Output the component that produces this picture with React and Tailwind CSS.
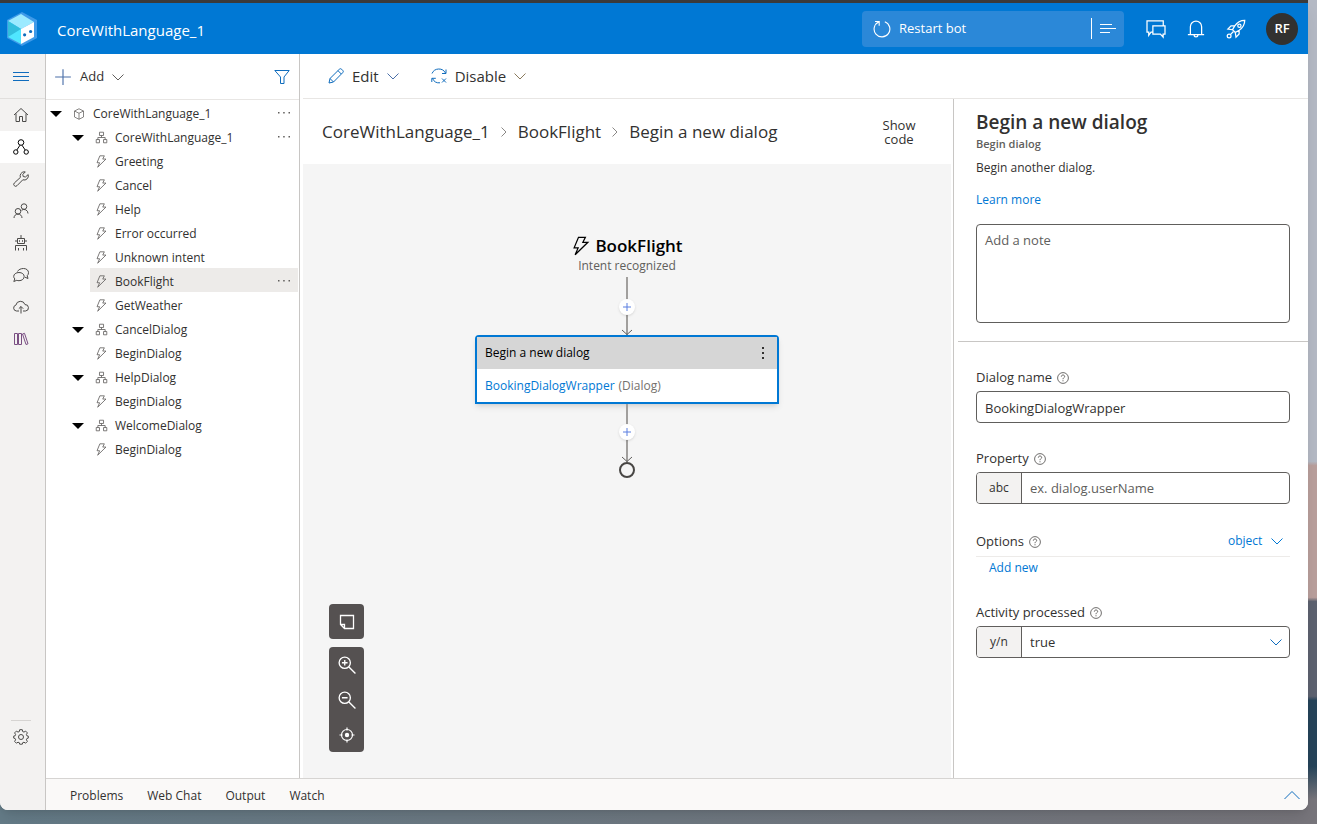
import { useState } from "react";

const Icon = ({ size = 16, className = "", children }) => (
  <svg
    width={size}
    height={size}
    viewBox="0 0 16 16"
    fill="none"
    stroke="currentColor"
    strokeWidth="1"
    className={`shrink-0 ${className}`}
    aria-hidden="true"
  >
    {children}
  </svg>
);

const BoltIcon = (props) => (
  <Icon {...props}>
    <path d="M6 1h5.500L9.500 5h4L3.300 15l2.400-5.500H2.500z" />
  </Icon>
);

const ChevronDown = ({ className = "" }) => (
  <svg width="12" height="12" viewBox="0 0 12 12" fill="none" stroke="currentColor" className={`shrink-0 ${className}`} aria-hidden="true">
    <path d="M.5 3.5L6 9l5.5-5.5" />
  </svg>
);

const FlowIcon = (props) => (
  <Icon {...props}>
    <path d="M5.5 1.5h5v4h-5zM1.5 10.5h4v4h-4zM10.5 10.5h4v4h-4zM8 5.5V8M3.5 10.5V8h9v2.5" />
  </Icon>
);

const CubeIcon = (props) => (
  <Icon {...props}>
    <path d="M8 1l6 3v8l-6 3-6-3V4zM2 4l6 3 6-3M8 7v8" />
  </Icon>
);

const HelpIcon = () => (
  <Icon size={12} className="text-[#605e5c]">
    <circle cx="8" cy="8" r="7.2" strokeWidth="1.2" />
    <path d="M5.8 6.2c0-1.4 1-2.2 2.2-2.2s2.2.8 2.2 2c0 1.5-2.2 1.7-2.2 3.6M8 11v1.4" strokeWidth="1.3" />
  </Icon>
);

const Logo = () => (
  <svg width="30" height="34" viewBox="0 0 30 34" aria-hidden="true">
    <path d="M15 0l15 8v18l-15 8L0 26V8z" fill="#3f9ae8" />
    <path d="M14 2l13 8-13 7L1 9z" fill="#9ceaff" />
    <path d="M1 9l13 8v15L1 25z" fill="#50e6ff" />
    <path d="M1 9l13 8L1 25z" fill="#32bedd" />
    <path d="M14 17l13-7v15l-13 7z" fill="#fff" />
    <circle cx="17.6" cy="22.8" r="1.6" fill="#0f6cbd" />
    <circle cx="23.6" cy="19.5" r="1.6" fill="#0f6cbd" />
  </svg>
);

const navItems = [
  {
    label: "Home",
    icon: <path d="M1 8l7-6.5L15 8M3 6.5v8h3.5V9.5h3v5H13v-8" />,
  },
  {
    label: "Create",
    icon: (
      <>
        <circle cx="8" cy="3.5" r="2.8" />
        <circle cx="2.8" cy="13" r="2.2" />
        <circle cx="13.2" cy="13" r="2.2" />
        <path d="M7 6.2L3.8 11M9 6.2l3.2 4.8" />
      </>
    ),
  },
  {
    label: "Configure",
    icon: (
      <path d="M11 .8a4.2 4.2 0 0 0-3.6 5.6L1.3 12a1.9 1.9 0 0 0 2.7 2.7l5.8-5.9A4.2 4.2 0 0 0 15.2 3.6L12.4 6l-2.2-.5L9.8 3.4 12.3.9z" />
    ),
  },
  {
    label: "User input",
    icon: (
      <>
        <circle cx="11" cy="3.6" r="2.8" />
        <circle cx="5" cy="8.3" r="2.8" />
        <path d="M1 15c0-2.4 1.8-3.9 4-3.9S9 12.600 9 15M8.500 7.300A4 4 0 0 1 15 10.500" />
      </>
    ),
  },
  {
    label: "Bot responses",
    icon: (
      <>
        <path d="M8 0v3.500M4.500 3.500h7v5h-7zM3 5v2M13 5v2M2.500 15.500v-5h11v5M5.500 13v2.500M10.500 13v2.500" />
        <path d="M6 6h1M9 6h1" strokeWidth="1.4" />
      </>
    ),
  },
  {
    label: "QnA",
    icon: (
      <path d="M4.500 4.500C5.500 2.500 8 1.500 10.500 1.500c3 0 5 1.800 5 4.200 0 1.300-.5 2.300-1.300 3l.8 2.800-3-1.300M6 5.500c3 0 5.200 1.700 5.200 4s-2.200 4.200-5.200 4.200c-.8 0-1.500-.1-2.200-.4L.8 14.500l1-2.600A3.600 3.600 0 0 1 .7 9.500c0-2.300 2.300-4 5.300-4z" />
    ),
  },
  {
    label: "Publish",
    icon: (
      <path d="M6 12H3.500a3 3 0 0 1-.6-5.900A4.700 4.700 0 0 1 12 5.600 3.200 3.200 0 0 1 12.500 12H10M8 14.500v-7M5.800 9.700L8 7.500l2.200 2.200" />
    ),
  },
  {
    label: "Package manager",
    tint: "text-[#7a4f83]",
    icon: <path d="M1.500 2.500h3v11h-3zM5.500 2.500h3v11h-3zM9.500 3l2-.7 3.500 10.500-2 .7z" />,
  },
];

const treeItems = [
  { label: "CoreWithLanguage_1", level: 0, type: "bot", menu: true },
  { label: "CoreWithLanguage_1", level: 1, type: "dialog", menu: true },
  { label: "Greeting", level: 2 },
  { label: "Cancel", level: 2 },
  { label: "Help", level: 2 },
  { label: "Error occurred", level: 2 },
  { label: "Unknown intent", level: 2 },
  { label: "BookFlight", level: 2, menu: true },
  { label: "GetWeather", level: 2 },
  { label: "CancelDialog", level: 1, type: "dialog" },
  { label: "BeginDialog", level: 2 },
  { label: "HelpDialog", level: 1, type: "dialog" },
  { label: "BeginDialog", level: 2 },
  { label: "WelcomeDialog", level: 1, type: "dialog" },
  { label: "BeginDialog", level: 2 },
];

const indents = ["ml-0", "ml-[22px]", "ml-[44px]"];

const Header = () => (
  <header className="flex h-[51px] shrink-0 items-center bg-[#0078d4] pl-[7px] pr-[10px] text-white">
    <Logo />
    <h1 className="ml-5 flex-1 pt-[3px] text-[15px]">CoreWithLanguage_1</h1>
    <div className="flex h-9 w-[262px] items-center rounded-sm bg-[#2b88d8]">
      <button className="flex flex-1 items-center gap-2 pl-[11px] text-left text-[13px]">
        <Icon size={18}>
          <path d="M10.500 1.500A7 7 0 1 1 5 1.700M1.800 1.300h3.700V5" />
        </Icon>
        Restart bot
      </button>
      <span className="h-[21px] w-px bg-white" />
      <button className="px-2" aria-label="Bot actions">
        <Icon>
          <path d="M0 3.500h12M0 7.500h16M0 11.500h10" />
        </Icon>
      </button>
    </div>
    <div className="ml-[22px] flex items-center gap-5">
      <button aria-label="Web chat">
        <Icon size={20}>
          <path d="M5 10.500H4L2.200 13v-2.500H.8v-9h13V5M5.500 5.500h9.700v6.500h-1.500v2.500L11.500 12h-6z" />
        </Icon>
      </button>
      <button aria-label="Notifications">
        <Icon size={20}>
          <path d="M1.500 12.500h13M3.500 12.500V6.200a4.500 4.500 0 0 1 9 0v6.300M6.500 12.700c0 2 3 2 3 0" />
        </Icon>
      </button>
      <button aria-label="Get started">
        <Icon size={20}>
          <path d="M15 1c-3.500 0-6 1.500-8 4.500L5.200 8.600l2.200 2.200L10.500 9C13.500 7 15 4.500 15 1zM7 5.500H4L1.500 8l3.700.6M10.500 9v3L8 14.500l-.6-3.700" />
          <circle cx="10.700" cy="5.300" r="1.300" />
          <circle cx="2.500" cy="13.500" r="1.500" />
          <path d="M3.500 12.500L6 10" />
        </Icon>
      </button>
      <button className="h-8 w-8 rounded-full bg-[#323130] text-[13px] font-semibold">RF</button>
    </div>
  </header>
);

const NavRail = () => (
  <nav className="flex w-[46px] shrink-0 flex-col border-r border-[#c8c6c4] bg-[#f3f2f1] text-[#4b4a48]">
    <button className="flex h-[45px] shrink-0 items-center border-b border-[#e1dfdd] pl-[13px]" aria-label="Menu">
      <Icon className="text-[#0f6cbd]">
        <path d="M0 4.500h16M0 8.500h16M0 12.500h16" />
      </Icon>
    </button>
    {navItems.map((item) => (
      <a
        key={item.label}
        href="#"
        aria-label={item.label}
        className={`flex h-8 items-center pl-[13px] ${item.label === "Create" ? "bg-white text-black" : ""} ${item.tint || ""}`}
      >
        <Icon>{item.icon}</Icon>
      </a>
    ))}
    <div className="ml-[11px] mr-[14px] mt-auto border-t border-[#d6d4d2]" />
    <a href="#" aria-label="Settings" className="mb-[57px] flex h-8 items-center pl-[13px]">
      <Icon>
        <path d="M6.700.7h2.600l.4 1.900 1.300.5 1.600-1 1.800 1.800-1 1.600.5 1.300 1.400.3v2l-1.400.4-.5 1.300 1 1.600-1.800 1.800-1.600-1-1.300.5-.4 1.500H6.700l-.4-1.500-1.300-.5-1.600 1-1.800-1.800 1-1.600-.5-1.300-1.400-.4v-2l1.400-.3.5-1.300-1-1.600 1.800-1.800 1.600 1 1.300-.5z" />
        <circle cx="8" cy="8" r="2.500" />
      </Icon>
    </a>
  </nav>
);

const ProjectTree = ({ selected, onSelect }) => (
  <aside className="flex w-[254px] shrink-0 flex-col border-r border-[#c8c6c4]">
    <div className="flex h-[46px] shrink-0 items-center border-b border-[#e8e6e4] pl-2 pr-[9px]">
      <button className="flex items-center gap-2 text-[13px] text-[#323130]">
        <Icon size={18} className="text-[#4a6fa8]">
          <path d="M8 1v14M1 8h14" />
        </Icon>
        Add
        <ChevronDown className="text-[#605e5c]" />
      </button>
      <button className="ml-auto text-[#0f6cbd]" aria-label="Filter">
        <Icon>
          <path d="M.8 1.500h14.400L10 8v6.500H6.500V8z" />
        </Icon>
      </button>
    </div>
    <ul>
      {treeItems.map((item, i) => (
        <li key={i} className={`mr-px ${indents[item.level]}`}>
          <button
            onClick={() => onSelect(i)}
            className={`flex h-6 w-full items-center pt-[3px] text-left text-[12px] text-[#323130] ${selected === i ? "bg-[#edebe9]" : ""}`}
          >
            {item.type && (
              <span className="flex w-[22px] pl-1">
                <svg width="12" height="6" viewBox="0 0 12 6" aria-hidden="true">
                  <path d="M0 0h12L6 6z" fill="#000" />
                </svg>
              </span>
            )}
            <span className="flex w-[25px] pl-[5px] text-[#605e5c]">
              {item.type === "bot" && <CubeIcon size={12} />}
              {item.type === "dialog" && <FlowIcon size={13} />}
              {!item.type && <BoltIcon size={13} />}
            </span>
            <span className="flex-1">{item.label}</span>
            {item.menu && (
              <svg width="12" height="12" viewBox="0 0 12 12" fill="#605e5c" className="mr-2" aria-hidden="true">
                <path d="M0 4h1.500v1.500H0zM5.200 4h1.500v1.500H5.200zM10.500 4H12v1.500h-1.500z" />
              </svg>
            )}
          </button>
        </li>
      ))}
    </ul>
  </aside>
);

const Toolbar = () => (
  <div className="ml-[3px] flex h-[45px] shrink-0 items-center gap-8 border-b border-[#e8e6e4] pl-[25px] text-[15px] text-[#323130]">
    <button className="flex items-center gap-2">
      <Icon className="text-[#0f6cbd]">
        <path d="M1 15l1-4.500L11.300 1.300a1.700 1.700 0 0 1 2.400 0l1 1a1.700 1.700 0 0 1 0 2.400L5.500 14zM10 2.700L13.300 6M2 10.500L5.500 14" />
      </Icon>
      Edit
      <ChevronDown className="text-[#4a6fa8]" />
    </button>
    <button className="flex items-center gap-2">
      <Icon className="text-[#0f6cbd]">
        <path d="M1 5.500A7.500 7.500 0 0 1 14.500 5M15 1.500V5.500h-4M9 14.800A7.300 7.300 0 0 1 1.500 10.500M.8 14V10.300h4M11 10.500l4 4M15 10.500l-4 4" />
      </Icon>
      Disable
      <ChevronDown className="text-[#8a7a5c]" />
    </button>
  </div>
);

const BreadcrumbArrow = () => (
  <svg width="6" height="10" viewBox="0 0 6 10" fill="none" stroke="#8a8886" aria-hidden="true">
    <path d="M.5.500L5 5 .5 9.500" />
  </svg>
);

const Edge = ({ className, buttonTop }) => (
  <div className={`relative flex w-4 flex-col items-center ${className}`}>
    <span className="w-[2px] flex-1 bg-[#a19f9d]" />
    <button
      aria-label="Add action"
      className={`absolute flex h-4 w-4 items-center justify-center rounded-full bg-white text-[#5b7fe0] shadow ${buttonTop}`}
    >
      <svg width="8" height="8" viewBox="0 0 8 8" fill="none" stroke="currentColor" aria-hidden="true">
        <path d="M4 0v8M0 4h8" />
      </svg>
    </button>
    <svg width="12" height="6" viewBox="0 0 12 6" fill="none" stroke="#605e5c" className="absolute bottom-0" aria-hidden="true">
      <path d="M1 1l5 4.500L11 1" />
    </svg>
  </div>
);

const Canvas = () => (
  <div className="relative ml-[3px] mr-[2px] flex flex-1 flex-col items-center bg-[#f5f5f5] pt-[70px]">
    <div className="flex h-6 items-center gap-1 text-[17px] font-semibold text-black">
      <BoltIcon size={20} />
      BookFlight
    </div>
    <p className="text-[12px] leading-4 text-[#605e5c]">Intent recognized</p>
    <Edge className="mt-[3px] h-[58px]" buttonTop="top-[22px]" />
    <div className="w-[304px] rounded-t-sm border-2 border-[#0078d4] bg-white text-[12px] shadow-md">
      <div className="flex h-8 items-center justify-between bg-[#d6d6d6] pl-2 pr-[10px] text-black">
        Begin a new dialog
        <button aria-label="Node menu">
          <svg width="8" height="12" viewBox="0 0 8 12" fill="#323130" aria-hidden="true">
            <path d="M3 0h2v2H3zM3 5h2v2H3zM3 10h2v2H3z" />
          </svg>
        </button>
      </div>
      <div className="flex h-[33px] items-center gap-1 pl-2 text-[#75716d]">
        <a href="#" className="text-[#0078d4]">BookingDialogWrapper</a>
        (Dialog)
      </div>
    </div>
    <Edge className="h-[58px]" buttonTop="top-5" />
    <span className="h-4 w-4 rounded-full border-2 border-[#484644]" />

    <div className="absolute bottom-[26px] left-[26px] flex flex-col gap-2 text-white">
      <button className="flex h-[35px] w-[35px] items-center justify-center rounded-sm bg-[#555151]" aria-label="Add comment">
        <Icon>
          <path d="M1.500 1.500h13v13h-9l-4-4zM1.500 10.500h4v4" strokeWidth="1.3" />
        </Icon>
      </button>
      <div className="flex flex-col overflow-hidden rounded-sm bg-[#555151]">
        <button className="flex h-[35px] w-[35px] items-center justify-center" aria-label="Zoom in">
          <Icon size={18}>
            <circle cx="6" cy="6" r="5" strokeWidth="1.2" />
            <path d="M9.500 9.500l6 6M6 3.500v5M3.500 6h5" strokeWidth="1.2" />
          </Icon>
        </button>
        <button className="flex h-[35px] w-[35px] items-center justify-center" aria-label="Zoom out">
          <Icon size={18}>
            <circle cx="6" cy="6" r="5" strokeWidth="1.2" />
            <path d="M9.500 9.500l6 6M3.500 6h5" strokeWidth="1.2" />
          </Icon>
        </button>
        <button className="flex h-[35px] w-[35px] items-center justify-center" aria-label="Reset view">
          <Icon>
            <circle cx="8" cy="8" r="5.500" strokeWidth="1.2" />
            <circle cx="8" cy="8" r="2.200" fill="currentColor" stroke="none" />
            <path d="M8 .5v3M8 12.500v3M.5 8h3M12.500 8h3" strokeWidth="1.2" />
          </Icon>
        </button>
      </div>
    </div>
  </div>
);

const FieldLabel = ({ htmlFor, children }) => (
  <label htmlFor={htmlFor} className="flex h-7 items-center gap-[5px] pt-px text-[13px]">
    {children}
    <HelpIcon />
  </label>
);

const PropertyPanel = () => {
  const [form, setForm] = useState({
    note: "",
    dialogName: "BookingDialogWrapper",
    property: "",
    optionsType: "object",
    activityProcessed: "true",
  });

  const handleChange = (e) => {
    setForm({ ...form, [e.target.name]: e.target.value });
  };

  return (
    <section className="w-[355px] shrink-0 border-l border-[#c8c6c4] text-[#323130]">
      <div className="pl-[22px] pr-[18px] pt-[9px]">
        <h2 className="text-[19px] font-semibold leading-7">Begin a new dialog</h2>
        <p className="text-[11px] font-semibold leading-4 text-[#605e5c]">Begin dialog</p>
        <p className="mt-2 text-[12px] leading-4">Begin another dialog.</p>
        <a href="#" className="mt-4 block text-[12px] leading-4 text-[#0078d4]">Learn more</a>
        <textarea
          name="note"
          aria-label="Note"
          placeholder="Add a note"
          className="mt-4 block h-[99px] w-full resize-none rounded-sm border border-[#605e5c] px-2 py-[5px] text-[13px] leading-5 placeholder:text-[#605e5c]"
          value={form.note}
          onChange={handleChange}
        />
      </div>
      <hr className="ml-1 mt-[18px] border-[#c8c6c4]" />
      <div className="pl-[22px] pr-[18px] pt-[21px]">
        <FieldLabel htmlFor="dialogName">Dialog name</FieldLabel>
        <input
          id="dialogName"
          name="dialogName"
          type="text"
          className="block h-8 w-full rounded-sm border border-[#605e5c] px-2 pt-px text-[13px]"
          value={form.dialogName}
          onChange={handleChange}
        />
        <div className="mt-[21px]">
          <FieldLabel htmlFor="property">Property</FieldLabel>
          <div className="flex h-8 overflow-hidden rounded-sm border border-[#605e5c]">
            <span className="flex w-[45px] items-center justify-center border-r border-[#605e5c] bg-[#f3f2f1] text-[12px]">abc</span>
            <input
              id="property"
              name="property"
              type="text"
              placeholder="ex. dialog.userName"
              className="min-w-0 flex-1 px-2 pt-[2px] text-[13px] placeholder:text-[#605e5c]"
              value={form.property}
              onChange={handleChange}
            />
          </div>
        </div>
        <div className="mt-[23px] flex items-center justify-between border-b border-[#edebe9] pb-px">
          <FieldLabel htmlFor="optionsType">Options</FieldLabel>
          <div className="relative flex items-center text-[#0078d4]">
            <select
              id="optionsType"
              name="optionsType"
              className="appearance-none pr-[27px] text-[12px]"
              value={form.optionsType}
              onChange={handleChange}
            >
              <option>object</option>
            </select>
            <ChevronDown className="pointer-events-none absolute right-[7px]" />
          </div>
        </div>
        <button className="ml-[13px] block h-[22px] text-[12px] text-[#0078d4]">Add new</button>
        <div className="mt-[19px]">
          <FieldLabel htmlFor="activityProcessed">Activity processed</FieldLabel>
          <div className="relative flex h-8 items-center overflow-hidden rounded-sm border border-[#605e5c]">
            <span className="flex h-full w-[45px] items-center justify-center border-r border-[#605e5c] bg-[#f3f2f1] text-[12px]">y/n</span>
            <select
              id="activityProcessed"
              name="activityProcessed"
              className="h-full flex-1 appearance-none px-2 pt-px text-[13px]"
              value={form.activityProcessed}
              onChange={handleChange}
            >
              <option>true</option>
              <option>false</option>
            </select>
            <ChevronDown className="pointer-events-none absolute right-[7px] text-[#0f6cbd]" />
          </div>
        </div>
      </div>
    </section>
  );
};

const BottomBar = () => (
  <footer className="flex h-8 shrink-0 items-center gap-6 border-t border-[#d6d4d2] bg-[#faf9f8] pl-6 pr-2 pt-[2px] text-[12px] font-medium text-[#323130]">
    <button>Problems</button>
    <button>Web Chat</button>
    <button>Output</button>
    <button>Watch</button>
    <button className="ml-auto text-[#0f6cbd]" aria-label="Expand panel">
      <Icon>
        <path d="M.5 11L8 3.500l7.500 7.500" />
      </Icon>
    </button>
  </footer>
);

const App = () => {
  const [selected, setSelected] = useState(7);

  return (
    <div
      className="h-screen overflow-hidden bg-[linear-gradient(to_bottom,#b4b9c4_0,#b4b9c4_56%,#b99f9c_56.500%,#b99f9c_72.500%,#5d6270_73%,#5d6270_84.500%,#26445a_85%,#26445a_93%,#77757b_97%)] pr-[9px] font-['Open_Sans',sans-serif]"
    >
      <div className="flex h-full flex-col bg-gradient-to-r from-[#647b87] to-[#77757b] pb-[14px]">
        <div className="flex min-h-0 flex-1 flex-col overflow-hidden rounded-b-lg bg-white shadow-lg">
          <div className="h-[3px] shrink-0 bg-[#3b3a39]" />
          <Header />
          <div className="flex min-h-0 flex-1">
            <NavRail />
            <div className="flex min-w-0 flex-1 flex-col">
              <div className="flex min-h-0 flex-1">
                <ProjectTree selected={selected} onSelect={setSelected} />
                <div className="flex min-w-0 flex-1 flex-col">
                  <Toolbar />
                  <div className="flex min-h-0 flex-1">
                    <main className="flex min-w-0 flex-1 flex-col">
                      <div className="flex h-[65px] shrink-0 items-center justify-between pl-[22px] pr-9 text-[#323130]">
                        <div className="flex items-center gap-[11px] text-[17px]">
                          <a href="#">CoreWithLanguage_1</a>
                          <BreadcrumbArrow />
                          <a href="#">BookFlight</a>
                          <BreadcrumbArrow />
                          <span>Begin a new dialog</span>
                        </div>
                        <button className="w-9 text-[13px] leading-[14px]">Show code</button>
                      </div>
                      <Canvas />
                    </main>
                    <PropertyPanel />
                  </div>
                </div>
              </div>
              <BottomBar />
            </div>
          </div>
        </div>
      </div>
    </div>
  );
};

export default App;
